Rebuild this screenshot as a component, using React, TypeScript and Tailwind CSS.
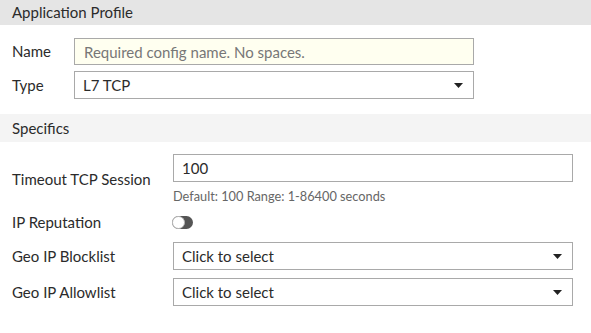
import React from "react";

function Caret() {
  return (
    <svg width="9" height="5" viewBox="0 0 9 5" className="shrink-0">
      <path d="M0 0h9L4.5 5z" fill="#222" />
    </svg>
  );
}

function SelectBox({ value }: { value: string }) {
  return (
    <div className="flex h-[28px] w-[400px] items-center justify-between border border-[#a9a9a9] bg-white pl-[8px] pr-[10px] text-[15px] text-[#2b2b2b]">
      <span>{value}</span>
      <Caret />
    </div>
  );
}

export default function App() {
  return (
    <div
      className="h-[333px] w-[591px] bg-white text-[#2b2b2b]"
      style={{ fontFamily: "Lato, 'Noto Sans', sans-serif" }}
    >
      <div className="flex h-[25px] items-center bg-[#e5e5e5] px-[12px] text-[15px]">
        Application Profile
      </div>

      <div className="flex flex-col gap-[6px] pt-[13px]">
        <div className="flex items-center">
          <label className="w-[74px] pl-[12px] text-[15px]">Name</label>
          <input
            placeholder="Required config name. No spaces."
            className="h-[27px] w-[400px] border border-[#a9a9a9] bg-[#fffff0] px-[9px] text-[15px] text-[#2b2b2b] placeholder:text-[#777] outline-none"
          />
        </div>
        <div className="flex items-center">
          <label className="w-[74px] pl-[12px] text-[15px]">Type</label>
          <SelectBox value="L7 TCP" />
        </div>
      </div>

      <div className="mt-[15px] flex h-[28px] items-center bg-[#f4f4f4] px-[12px] text-[15px]">
        Specifics
      </div>

      <div className="pt-[12px]">
        <div className="flex">
          <label className="flex w-[173px] items-end pb-[15px] pl-[12px] text-[15px]">
            Timeout TCP Session
          </label>
          <div className="flex flex-col">
            <input
              defaultValue="100"
              className="h-[28px] w-[400px] border border-[#a9a9a9] bg-white px-[8px] text-[15px] text-[#2b2b2b] outline-none"
            />
            <span className="mt-[5px] text-[12.75px] leading-[18px] text-[#666]">
              Default: 100 Range: 1-86400 seconds
            </span>
          </div>
        </div>

        <div className="mt-[9px] flex h-[16px] items-center">
          <label className="w-[172px] pl-[12px] text-[15px]">IP Reputation</label>
          <div className="relative h-[13px] w-[21px] rounded-full bg-[#555]">
            <div className="absolute left-0 top-0 h-[13px] w-[13px] rounded-full border border-[#bbb] bg-white" />
          </div>
        </div>

        <div className="mt-[12px] flex flex-col gap-[8px]">
          <div className="flex items-center">
            <label className="w-[173px] pl-[12px] text-[15px]">Geo IP Blocklist</label>
            <SelectBox value="Click to select" />
          </div>
          <div className="flex items-center">
            <label className="w-[173px] pl-[12px] text-[15px]">Geo IP Allowlist</label>
            <SelectBox value="Click to select" />
          </div>
        </div>
      </div>
    </div>
  );
}
